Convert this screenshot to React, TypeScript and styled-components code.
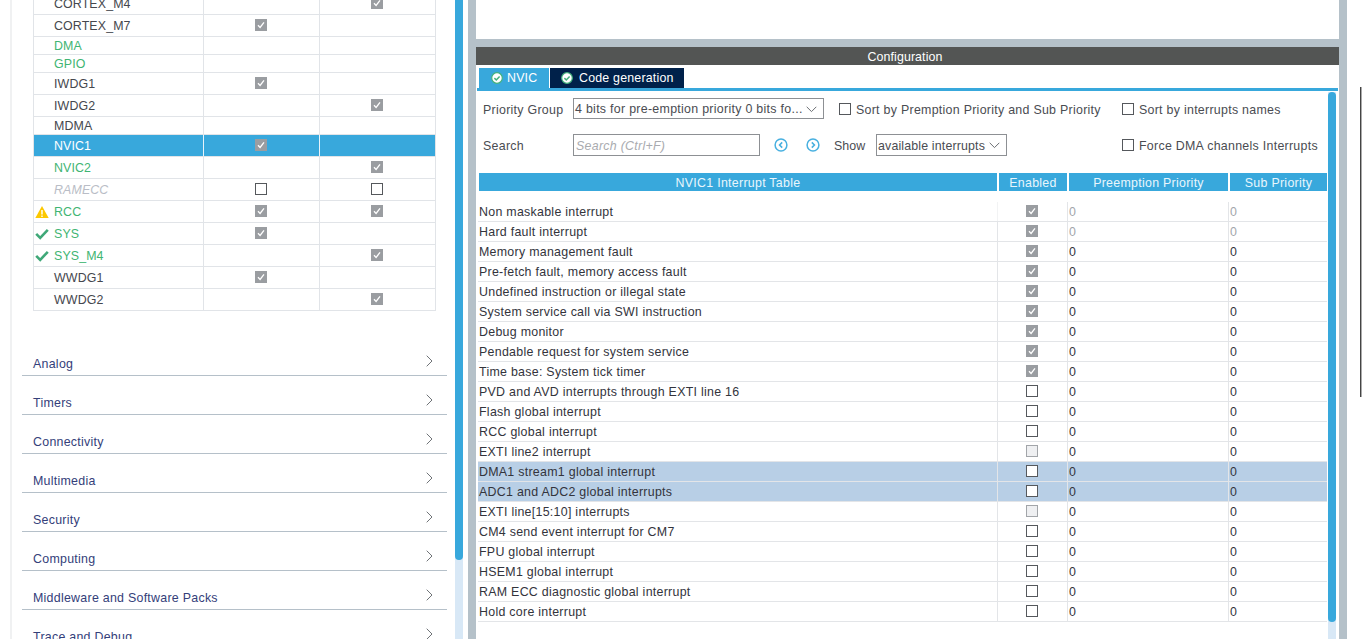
import React from "react";
import styled, { createGlobalStyle } from "styled-components";

const Global = createGlobalStyle`
  html, body { margin: 0; padding: 0; background: #fff; overflow: hidden; }
  body { font-family: "Liberation Sans", Arial, sans-serif; font-size: 12px; color: #3a3d45; }
  * { box-sizing: border-box; }
`;

const Page = styled.div`
  display: flex;
  width: 1362px;
  height: 639px;
  overflow: hidden;
  background: #fff;
`;

const LeftPane = styled.aside`
  display: flex;
  width: 468px;
  height: 639px;
  padding-left: 10px;
  padding-right: 3px;
  flex: none;
`;

const LeftContent = styled.div`
  width: 445px;
  height: 639px;
  border-left: 2px solid #f0f1f2;
  overflow: hidden;
  flex: none;
`;

const Track = styled.div`
  width: 8px;
  height: ${(p) => p.$h}px;
  margin-top: ${(p) => p.$top}px;
  background: #d8e8f6;
  flex: none;
`;

const Thumb = styled.div`
  height: ${(p) => p.$h}px;
  background: #38a8dc;
  border-radius: ${(p) => p.$radius};
`;

const Divider = styled.div`
  width: 8px;
  height: 639px;
  background: #b5c1c9;
  flex: none;
`;

const PeripheralTable = styled.div`
  width: 403px;
  margin: -7px 0 0 21px;
  border-left: 1px solid #e1e4e8;
  border-right: 1px solid #e1e4e8;
`;

const PRow = styled.div`
  display: grid;
  grid-template-columns: 170px 116px 115px;
  height: ${(p) => (p.$short ? 18 : 22)}px;
  border-bottom: 1px solid #e1e4e8;
  background: ${(p) => (p.$selected ? "#38a8dc" : "#fff")};
`;

const PName = styled.div`
  display: flex;
  align-items: center;
  position: relative;
  padding-left: 20px;
  border-right: 1px solid ${(p) => (p.$selected ? "#e8f3fa" : "#e1e4e8")};
  font-size: 12.4px;
  letter-spacing: 0.12px;
  font-style: ${(p) => (p.$tone === "muted" ? "italic" : "normal")};
  color: ${(p) =>
    p.$selected ? "#fff" : p.$tone === "green" ? "#3fb573" : p.$tone === "muted" ? "#b9bdc6" : "#45474e"};
`;

const PCell = styled.div`
  display: flex;
  align-items: center;
  justify-content: center;
  padding: 0 1px 1px 0;
  border-right: ${(p) => (p.$last ? "0" : `1px solid ${p.$selected ? "#e8f3fa" : "#e1e4e8"}`)};
`;

const StatusIcon = styled.svg`
  position: absolute;
  left: 1px;
  top: 50%;
  transform: translateY(-50%);
`;

const BoxWrap = styled.span`
  display: inline-flex;
  width: 12px;
  height: 12px;
  flex: none;
  border: 1px solid ${(p) => (p.$kind === "checked" ? "#9a9da1" : p.$kind === "disabled" ? "#a2a5a9" : "#55585c")};
  background: ${(p) => (p.$kind === "checked" ? "#9a9da1" : p.$kind === "disabled" ? "#eff0f2" : "#fff")};
`;

const Box = ({ kind }: { kind: string }) => (
  <BoxWrap $kind={kind}>
    {kind === "checked" && (
      <svg width="10" height="10" viewBox="0 0 10 10">
        <path d="M2 5.2 L4.1 7.4 L8 2.4" fill="none" stroke="#fff" strokeWidth="1.3" />
      </svg>
    )}
  </BoxWrap>
);

const Categories = styled.div`
  width: 425px;
  margin: 26px 0 0 10px;
`;

const Category = styled.div`
  display: flex;
  align-items: flex-end;
  justify-content: space-between;
  height: 39px;
  padding: 0 14px 4px 11px;
  border-bottom: 1px solid #b5c0c9;
  font-size: 12.4px;
  letter-spacing: 0.27px;
  color: #34407a;
`;

const Chevron = styled.svg`
  margin-bottom: 4px;
`;

const RightPane = styled.main`
  display: flex;
  flex-direction: column;
  width: 863px;
  height: 639px;
  flex: none;
`;

const TopBlank = styled.div`
  height: 39px;
  background: #fff;
  flex: none;
`;

const GreyBand = styled.div`
  height: 8px;
  background: #b5c1c9;
  flex: none;
`;

const ConfigTitle = styled.div`
  height: 18px;
  line-height: 20px;
  padding-right: 5px;
  background: #535554;
  color: #fff;
  text-align: center;
  font-size: 12.4px;
  letter-spacing: 0.1px;
  flex: none;
`;

const TabBar = styled.div`
  display: flex;
  height: 23px;
  padding: 3px 0 0 3px;
  gap: 1px;
  flex: none;
`;

const Tab = styled.div`
  display: flex;
  align-items: center;
  gap: ${(p) => p.$gap}px;
  width: ${(p) => p.$w}px;
  height: 20px;
  padding-left: ${(p) => p.$pad}px;
  color: #fff;
  font-size: 12.4px;
  letter-spacing: 0.2px;
  background: ${(p) => (p.$active ? "#38a8dc" : "#00214a")};
`;

const BlueRule = styled.div`
  height: 3px;
  margin: 0 1px;
  background: #38a8dc;
  flex: none;
`;

const Body = styled.div`
  display: flex;
  flex: 1;
  min-height: 0;
  padding-left: 1px;
`;

const MainCol = styled.div`
  width: 851px;
  flex: none;
`;

const ToolRow = styled.div`
  display: flex;
  align-items: center;
  height: ${(p) => p.$h}px;
  margin-top: ${(p) => p.$top}px;
  padding-left: 6px;
  font-size: 12.4px;
  letter-spacing: 0.28px;
  color: #4a4c52;
`;

const FieldLabel = styled.label`
  width: 90px;
  margin-top: 2px;
  flex: none;
`;

const SelectBox = styled.div`
  display: flex;
  align-items: center;
  justify-content: space-between;
  width: ${(p) => p.$w}px;
  height: 100%;
  padding: 1px 6px 0 1px;
  border: 1px solid #8d9094;
  background: #fff;
  white-space: nowrap;
  flex: none;
  letter-spacing: ${(p) => p.$spacing}px;
`;

const SearchBox = styled.div`
  display: flex;
  align-items: center;
  width: 187px;
  height: 100%;
  padding: 1px 0 0 2px;
  border: 1px solid #8d9094;
  color: #a9abaf;
  font-style: italic;
  flex: none;
`;

const NavIcons = styled.div`
  display: flex;
  gap: 18px;
  margin-left: 14px;
  flex: none;
`;

const ShowLabel = styled.span`
  width: 42px;
  margin: 2px 0 0 14px;
  letter-spacing: 0.1px;
  flex: none;
`;

const CheckOption = styled.div`
  display: flex;
  align-items: center;
  gap: 5px;
  margin-left: ${(p) => p.$left || 0}px;
  white-space: nowrap;
`;

const OptionText = styled.span`
  margin-top: 2px;
`;

const EndOption = styled(CheckOption)`
  width: 206px;
  margin-left: auto;
  flex: none;
`;

const HeaderRow = styled.div`
  display: grid;
  grid-template-columns: 518px 68px 159px 97px;
  gap: 2px;
  height: 18px;
  margin: 17px 0 11px 2px;
  width: 850px;
`;

const HeaderCell = styled.div`
  display: flex;
  align-items: center;
  justify-content: center;
  padding-top: 2px;
  background: #38a8dc;
  color: #e9f6fc;
  font-size: 12.4px;
  letter-spacing: 0.28px;
`;

const IntRow = styled.div`
  display: grid;
  grid-template-columns: 520px 70px 161px 98px;
  width: 849px;
  height: 20px;
  margin-left: 1px;
  border-bottom: 1px solid #e3e5e8;
  background: ${(p) => (p.$hl ? "#b8cfe6" : "#fff")};
`;

const IntName = styled.div`
  display: flex;
  align-items: center;
  padding-left: 1px;
  border-right: 1px solid ${(p) => (p.$first ? "#f2f3f4" : "#e3e5e8")};
  font-size: 12.4px;
  letter-spacing: 0.28px;
  color: #33343c;
  white-space: nowrap;
`;

const IntCheck = styled.div`
  display: flex;
  align-items: center;
  justify-content: center;
  padding: 0 1px 1px 0;
  border-right: 1px solid #e3e5e8;
`;

const IntValue = styled.div`
  display: flex;
  align-items: center;
  padding-left: 1px;
  border-right: ${(p) => (p.$last ? "0" : "1px solid #e3e5e8")};
  font-size: 12.4px;
  color: ${(p) => (p.$dim ? "#a3a6ab" : "#33343c")};
`;

const RightEdge = styled.div`
  display: flex;
  flex: 1;
  background: #fff;
`;

const WindowEdge = styled.div`
  width: 2px;
  height: 310px;
  margin: 87px 0 0 13px;
  border-left: 1px solid #444;
  border-right: 1px solid #aaa;
`;

const periph = [
  { n: "CORTEX_M4", a: "", b: "checked" },
  { n: "CORTEX_M7", a: "checked", b: "" },
  { n: "DMA", a: "", b: "", t: "green", s: true },
  { n: "GPIO", a: "", b: "", t: "green", s: true },
  { n: "IWDG1", a: "checked", b: "" },
  { n: "IWDG2", a: "", b: "checked" },
  { n: "MDMA", a: "", b: "", s: true },
  { n: "NVIC1", a: "checked", b: "", sel: true },
  { n: "NVIC2", a: "", b: "checked", t: "green" },
  { n: "RAMECC", a: "empty", b: "empty", t: "muted" },
  { n: "RCC", a: "checked", b: "checked", t: "green", icon: "warn" },
  { n: "SYS", a: "checked", b: "", t: "green", icon: "ok" },
  { n: "SYS_M4", a: "", b: "checked", t: "green", icon: "ok" },
  { n: "WWDG1", a: "checked", b: "" },
  { n: "WWDG2", a: "", b: "checked" },
];

const cats = ["Analog", "Timers", "Connectivity", "Multimedia", "Security", "Computing", "Middleware and Software Packs", "Trace and Debug"];

const ints: [string, string, boolean?][] = [
  ["Non maskable interrupt", "checked"],
  ["Hard fault interrupt", "checked"],
  ["Memory management fault", "checked"],
  ["Pre-fetch fault, memory access fault", "checked"],
  ["Undefined instruction or illegal state", "checked"],
  ["System service call via SWI instruction", "checked"],
  ["Debug monitor", "checked"],
  ["Pendable request for system service", "checked"],
  ["Time base: System tick timer", "checked"],
  ["PVD and AVD interrupts through EXTI line 16", "empty"],
  ["Flash global interrupt", "empty"],
  ["RCC global interrupt", "empty"],
  ["EXTI line2 interrupt", "disabled"],
  ["DMA1 stream1 global interrupt", "empty", true],
  ["ADC1 and ADC2 global interrupts", "empty", true],
  ["EXTI line[15:10] interrupts", "disabled"],
  ["CM4 send event interrupt for CM7", "empty"],
  ["FPU global interrupt", "empty"],
  ["HSEM1 global interrupt", "empty"],
  ["RAM ECC diagnostic global interrupt", "empty"],
  ["Hold core interrupt", "empty"],
];

const TabCheck = () => (
  <svg width="12" height="12" viewBox="0 0 12 12">
    <circle cx="6" cy="6" r="5.3" fill="#fff" stroke="#45b27c" strokeWidth="1.2" />
    <path d="M3.4 6.1 L5.3 8 L8.6 4.4" fill="none" stroke="#45b27c" strokeWidth="1.5" />
  </svg>
);

const NavIcon = ({ dir }: { dir: "l" | "r" }) => (
  <svg width="14" height="14" viewBox="0 0 14 14">
    <circle cx="7" cy="7" r="5.9" fill="none" stroke="#48b0e0" strokeWidth="1.5" />
    <path d={dir === "l" ? "M8.2 4.4 L5.6 7 L8.2 9.6" : "M5.8 4.4 L8.4 7 L5.8 9.6"} fill="none" stroke="#48b0e0" strokeWidth="1.6" />
  </svg>
);

const DownChevron = () => (
  <svg width="11" height="7" viewBox="0 0 11 7">
    <path d="M0.7 0.8 L5.5 5.6 L10.3 0.8" fill="none" stroke="#6b6e72" strokeWidth="1" />
  </svg>
);

export default function App() {
  return (
    <Page>
      <Global />
      <LeftPane>
        <LeftContent>
          <PeripheralTable>
            {periph.map((r) => (
              <PRow key={r.n} $short={r.s} $selected={r.sel}>
                <PName $tone={r.t} $selected={r.sel}>
                  {r.icon === "warn" && (
                    <StatusIcon width="14" height="13" viewBox="0 0 14 13">
                      <path d="M7 0.5 L13.7 12.6 L0.3 12.6 Z" fill="#fcc800" />
                      <path d="M7 4.5 V9 M7 10 V11.4" stroke="#fff" strokeWidth="1.4" />
                    </StatusIcon>
                  )}
                  {r.icon === "ok" && (
                    <StatusIcon width="14" height="12" viewBox="0 0 14 12">
                      <path d="M1.2 5.8 L5.2 9.8 L12.8 1.8" fill="none" stroke="#3fa878" strokeWidth="2.6" />
                    </StatusIcon>
                  )}
                  {r.n}
                </PName>
                <PCell $selected={r.sel}>{r.a && <Box kind={r.a} />}</PCell>
                <PCell $last>{r.b && <Box kind={r.b} />}</PCell>
              </PRow>
            ))}
          </PeripheralTable>
          <Categories>
            {cats.map((c) => (
              <Category key={c}>
                {c}
                <Chevron width="7" height="12" viewBox="0 0 7 12">
                  <path d="M0.7 0.7 L6 6 L0.7 11.3" fill="none" stroke="#6f7377" strokeWidth="1" />
                </Chevron>
              </Category>
            ))}
          </Categories>
        </LeftContent>
        <Track $h={639} $top={0}>
          <Thumb $h={560} $radius="0 0 4px 4px" />
        </Track>
      </LeftPane>
      <Divider />
      <RightPane>
        <TopBlank />
        <GreyBand />
        <ConfigTitle>Configuration</ConfigTitle>
        <TabBar>
          <Tab $active $w={70} $pad={12} $gap={4}>
            <TabCheck />
            NVIC
          </Tab>
          <Tab $w={134} $pad={11} $gap={6}>
            <TabCheck />
            Code generation
          </Tab>
        </TabBar>
        <BlueRule />
        <Body>
          <MainCol>
            <ToolRow $h={21} $top={7}>
              <FieldLabel>Priority Group</FieldLabel>
              <SelectBox $w={251} $spacing={0.29}>
                4 bits for pre-emption priority 0 bits fo...
                <DownChevron />
              </SelectBox>
              <CheckOption $left={15}>
                <Box kind="empty" />
                <OptionText>Sort by Premption Priority and Sub Priority</OptionText>
              </CheckOption>
              <EndOption>
                <Box kind="empty" />
                <OptionText>Sort by interrupts names</OptionText>
              </EndOption>
            </ToolRow>
            <ToolRow $h={22} $top={15}>
              <FieldLabel>Search</FieldLabel>
              <SearchBox>Search (Ctrl+F)</SearchBox>
              <NavIcons>
                <NavIcon dir="l" />
                <NavIcon dir="r" />
              </NavIcons>
              <ShowLabel>Show</ShowLabel>
              <SelectBox $w={131} $spacing={0.15}>
                available interrupts
                <DownChevron />
              </SelectBox>
              <EndOption>
                <Box kind="empty" />
                <OptionText>Force DMA channels Interrupts</OptionText>
              </EndOption>
            </ToolRow>
            <HeaderRow>
              <HeaderCell>NVIC1 Interrupt Table</HeaderCell>
              <HeaderCell>Enabled</HeaderCell>
              <HeaderCell>Preemption Priority</HeaderCell>
              <HeaderCell>Sub Priority</HeaderCell>
            </HeaderRow>
            {ints.map(([name, state, hl], i) => (
              <IntRow key={name} $hl={hl}>
                <IntName $first={i === 0}>{name}</IntName>
                <IntCheck>
                  <Box kind={state} />
                </IntCheck>
                <IntValue $dim={i < 2}>0</IntValue>
                <IntValue $dim={i < 2} $last>
                  0
                </IntValue>
              </IntRow>
            ))}
          </MainCol>
          <Track $h={547} $top={1}>
            <Thumb $h={530} $radius="4px" />
          </Track>
        </Body>
      </RightPane>
      <Divider />
      <RightEdge>
        <WindowEdge />
      </RightEdge>
    </Page>
  );
}
